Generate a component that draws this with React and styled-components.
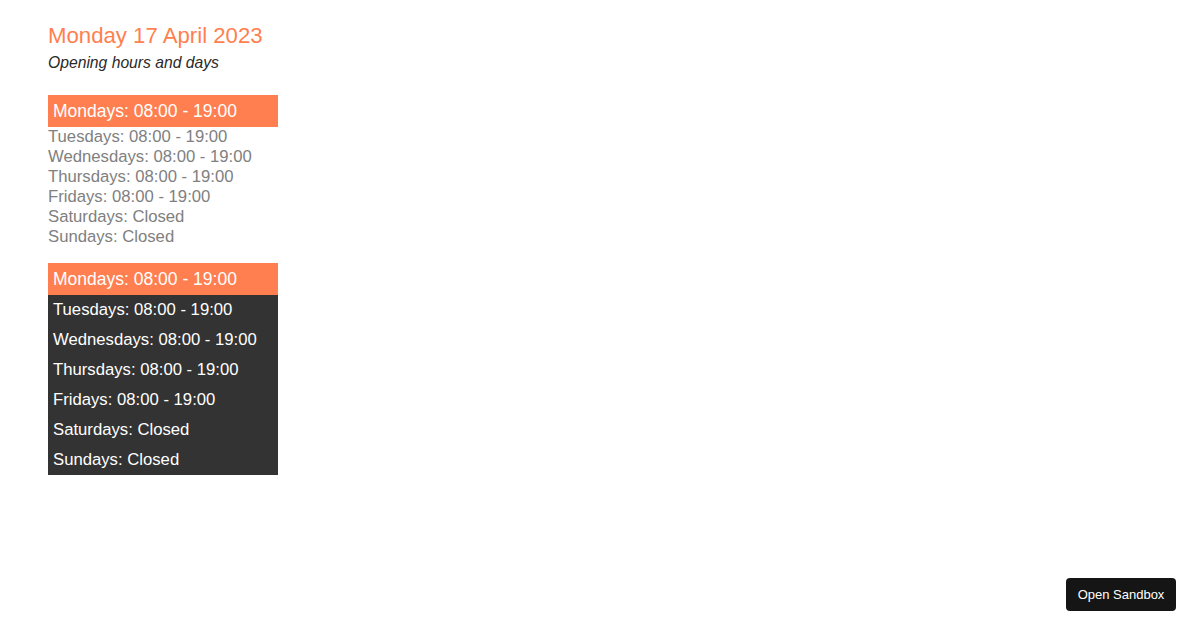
import React from 'react';
import styled, { createGlobalStyle } from 'styled-components';

const GlobalStyle = createGlobalStyle` body { margin: 0; font-family: "Liberation Sans", Arial, sans-serif; background: white; }`;

const Page = styled.div` padding: 23px 48px;`;
const Title = styled.h1` margin: 0; font-size: 22.2px; font-weight: 400; line-height: 25px; color: #ff7f50;`;
const Subtitle = styled.p` margin: 6px 0 23px; font-size: 15.7px; font-style: italic; line-height: 18px; color: #2a2a2a;`;
const HoursList = styled.ul` list-style: none; margin: 0 0 16px; padding: 0; width: 230px; background-color: ${props => props.$dark ? '#333' : 'transparent'};`;
const HoursItem = styled.li` font-size: ${props => props.$today ? '17.5px' : '16.7px'}; line-height: ${props => props.$today ? '32px' : props.$dark ? '30px' : '20px'}; padding-left: ${props => props.$today || props.$dark ? '5px' : '0'}; background-color: ${props => props.$today ? '#ff7f50' : 'transparent'}; color: ${props => props.$today || props.$dark ? 'white' : '#808080'};`;
const SandboxButton = styled.button` position: fixed; right: 24px; bottom: 19px; width: 110px; height: 33px; border: none; border-radius: 4px; background-color: #151515; color: white; font-family: "Liberation Sans", Arial, sans-serif; font-size: 13px; cursor: pointer;`;

const days = [
    { day: 'Mondays', hours: '08:00 - 19:00' },
    { day: 'Tuesdays', hours: '08:00 - 19:00' },
    { day: 'Wednesdays', hours: '08:00 - 19:00' },
    { day: 'Thursdays', hours: '08:00 - 19:00' },
    { day: 'Fridays', hours: '08:00 - 19:00' },
    { day: 'Saturdays', hours: 'Closed' },
    { day: 'Sundays', hours: 'Closed' },
];

function OpeningHours({ dark }) {
    return (
        <HoursList $dark={dark}>
            {days.map((d, i) => (
                <HoursItem key={d.day} $today={i === 0} $dark={dark}>
                    {d.day}: {d.hours}
                </HoursItem>
            ))}
        </HoursList>
    );
}

export default function App() {
    return (
        <>
            <GlobalStyle />
            <Page>
                <Title>Monday 17 April 2023</Title>
                <Subtitle>Opening hours and days</Subtitle>
                <OpeningHours />
                <OpeningHours dark />
            </Page>
            <SandboxButton>Open Sandbox</SandboxButton>
        </>
    );
}
